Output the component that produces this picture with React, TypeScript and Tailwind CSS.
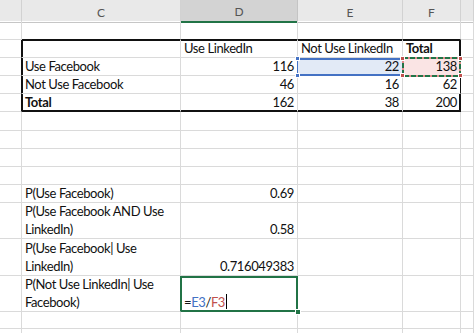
import React from "react";

type Cell = { t?: React.ReactNode; r?: boolean; b?: boolean };

const heads = ["", "C", "D", "E", "F", ""];

const E: Cell = {};

const rows: Cell[][] = [
  [E, E, E, E, E, E],
  [E, E, { t: "Use LinkedIn" }, { t: "Not Use LinkedIn" }, { t: "Total", b: true }, E],
  [E, { t: "Use Facebook" }, { t: "116", r: true }, { t: "22", r: true }, { t: "138", r: true }, E],
  [E, { t: "Not Use Facebook" }, { t: "46", r: true }, { t: "16", r: true }, { t: "62", r: true }, E],
  [E, { t: "Total", b: true }, { t: "162", r: true }, { t: "38", r: true }, { t: "200", r: true }, E],
  [E, E, E, E, E, E],
  [E, E, E, E, E, E],
  [E, E, E, E, E, E],
  [E, E, E, E, E, E],
  [E, { t: "P(Use Facebook)" }, { t: "0.69", r: true }, E, E, E],
  [E, { t: <>P(Use Facebook AND Use<br />LinkedIn)</> }, { t: "0.58", r: true }, E, E, E],
  [E, { t: <>P(Use Facebook| Use<br />LinkedIn)</> }, { t: "0.716049383", r: true }, E, E, E],
  [
    E,
    { t: <>P(Not Use LinkedIn| Use<br />Facebook)</> },
    {
      t: (
        <span className="flex items-end">
          =<span className="text-[#4472c4]">E3</span>/<span className="text-[#c0504d]">F3</span>
          <span className="inline-block w-px h-[15px] bg-black mb-[2px] ml-px" />
        </span>
      ),
    },
    E,
    E,
    E,
  ],
  [E, E, E, E, E, E],
  [E, E, E, E, E, E],
];

// per-cell formatting: table outline C2:F5, reference ranges, active cell
const fmt: Record<string, string> = {
  "0-1": "border-b-[#111]",
  "0-2": "border-b-[#111]",
  "0-3": "border-b-[#111]",
  "0-4": "border-b-[#111]",
  "1-0": "border-r-[#111]",
  "2-0": "border-r-[#111]",
  "3-0": "border-r-[#111]",
  "4-0": "border-r-[#111]",
  "1-1": "shadow-[inset_1px_1px_0_#111]",
  "1-2": "shadow-[inset_0_1px_0_#111]",
  "1-3": "shadow-[inset_0_1px_0_#111]",
  "1-4": "border-r-[#111] shadow-[inset_-1px_1px_0_#111]",
  "2-1": "shadow-[inset_1px_0_0_#111]",
  "2-2": "border-r-[#4472c4]",
  "2-3": "bg-[#e2eaf6] shadow-[inset_0_2px_0_#4472c4,inset_0_-1px_0_#4472c4] border-b-[#4472c4]",
  "2-4": "bg-[#fae4e4] border-r-[#111] border-b-[#c0504d]",
  "3-1": "shadow-[inset_1px_0_0_#111]",
  "3-4": "border-r-[#111]",
  "4-1": "border-b-[#111] shadow-[inset_1px_-1px_0_#111]",
  "4-2": "border-b-[#111] shadow-[inset_0_-1px_0_#111]",
  "4-3": "border-b-[#111] shadow-[inset_0_-1px_0_#111]",
  "4-4": "border-r-[#111] border-b-[#111] shadow-[inset_-1px_-1px_0_#111]",
  "12-1": "border-r-[#217346]",
  "12-2": "border-r-[#217346] border-b-[#217346] shadow-[inset_1px_2px_0_#217346,inset_-1px_-1px_0_#217346]",
};

function Marquee() {
  return (
    <svg className="absolute left-[-1px] top-[-1px]" width="60" height="20">
      <rect x="1" y="1" width="57" height="18" fill="none" stroke="#e08c8a" strokeWidth="2" />
      <rect x="1" y="1" width="57" height="18" fill="none" stroke="#217346" strokeWidth="2" strokeDasharray="5 2" />
    </svg>
  );
}

const dot = "absolute z-10 w-[5px] h-[5px] border border-white";

export default function App() {
  return (
    <div className="w-[474px] h-[333px] overflow-hidden bg-white text-[13px] tracking-[-0.4px] text-[#111] font-['Lato','Liberation_Sans',sans-serif]">
      {/* column headers */}
      <div className="grid grid-cols-[22px_159px_117px_105px_58px_1fr] h-[21px] bg-[#e9e9e9] text-[#555] text-[12px] tracking-normal">
        {heads.map((h, i) => (
          <div
            key={i}
            className={
              h === "D"
                ? "flex items-center justify-center pt-[3px] bg-[#d3d3d3] border-r border-[#c4c4c4] border-b-2 border-b-[#217346]"
                : "flex items-center justify-center pt-[3px] border-r border-[#d2d2d2] border-b border-b-[#c6c6c6]"
            }
          >
            {h}
          </div>
        ))}
      </div>

      {/* sheet body */}
      <div className="grid grid-cols-[22px_159px_117px_105px_58px_1fr] grid-rows-[19px_18px_18px_18px_18px_19px_18px_18px_18px_18px_36px_37px_36px_17px_18px]">
        {rows.map((row, ri) =>
          row.map((c, ci) => {
            const key = ri + "-" + ci;
            return (
              <div
                key={key}
                className={
                  "relative flex items-end border-r border-b border-[#dadada] px-[3px] leading-[18px] whitespace-nowrap " +
                  (c.r ? "justify-end " : "justify-start ") +
                  (c.b ? "font-bold " : "") +
                  (fmt[key] ?? "")
                }
              >
                {c.t}
                {key === "2-3" && (
                  <>
                    <span className={dot + " left-[-3px] top-[-2px] bg-[#4472c4]"} />
                    <span className={dot + " left-[-3px] bottom-[-3px] bg-[#4472c4]"} />
                  </>
                )}
                {key === "2-4" && (
                  <>
                    <Marquee />
                    <span className={dot + " left-[-3px] top-[-2px] bg-[#c0504d]"} />
                    <span className={dot + " left-[-3px] bottom-[-3px] bg-[#c0504d]"} />
                    <span className={dot + " right-[-3px] top-[-2px] bg-[#c0504d]"} />
                    <span className={dot + " right-[-3px] bottom-[-3px] bg-[#c0504d]"} />
                  </>
                )}
                {key === "12-2" && (
                  <span className="absolute z-10 right-[-4px] bottom-[-4px] w-[6px] h-[6px] bg-[#217346] border border-white" />
                )}
              </div>
            );
          })
        )}
      </div>
    </div>
  );
}
